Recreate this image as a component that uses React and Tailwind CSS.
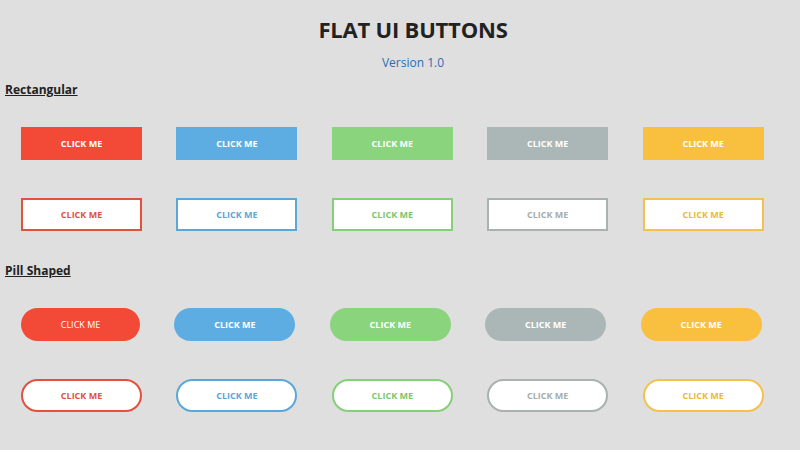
import React from "react";

const colors = [
  { name: "red", fill: "bg-[#f24a37]", border: "border-[#e2503e]", text: "text-[#e2503e]" },
  { name: "blue", fill: "bg-[#5dade2]", border: "border-[#5aa7d8]", text: "text-[#5aa7d8]" },
  { name: "green", fill: "bg-[#89d47c]", border: "border-[#86cf79]", text: "text-[#7cc66f]" },
  { name: "gray", fill: "bg-[#abb6b6]", border: "border-[#a9b1b1]", text: "text-[#a5aeae]" },
  { name: "yellow", fill: "bg-[#f8c03e]", border: "border-[#f4c24c]", text: "text-[#eab83f]" },
];

const Row = ({ children }) => (
  <div className="grid grid-cols-5 w-[777px] ml-[5px]">{children}</div>
);

const App = () => {
  return (
    <div
      className="w-[800px] h-[450px] bg-[#dfdfdf] text-[#222] overflow-hidden"
      style={{ fontFamily: '"Open Sans", "Noto Sans", sans-serif' }}
    >
      <h1 className="pt-[15px] text-center text-[22px] leading-[28px] font-bold tracking-[-0.2px] text-[#222] ml-[26px]">
        FLAT UI BUTTONS
      </h1>
      <p className="mt-[12px] text-center text-[12px] leading-[16px] text-[#2f6db0] ml-[26px]">
        Version 1.0
      </p>
      <h2 className="mt-[11px] ml-[5px] text-[12px] leading-[16px] font-bold underline">
        Rectangular
      </h2>

      <div className="mt-[29px]">
        <Row>
          {colors.map((c) => (
            <button
              key={c.name}
              className={`ml-4 w-[121px] h-[33px] ${c.fill} text-white text-[9px] font-bold`}
            >
              CLICK ME
            </button>
          ))}
        </Row>
      </div>
      <div className="mt-[38px]">
        <Row>
          {colors.map((c) => (
            <button
              key={c.name}
              className={`ml-4 w-[121px] h-[33px] bg-white border-2 ${c.border} ${c.text} text-[9px] font-bold`}
            >
              CLICK ME
            </button>
          ))}
        </Row>
      </div>

      <h2 className="mt-[32px] ml-[5px] text-[12px] leading-[16px] font-bold underline">
        Pill Shaped
      </h2>

      <div className="mt-[29px]">
        <Row>
          {colors.map((c, i) => (
            <button
              key={c.name}
              className={`h-[33px] rounded-full ${c.fill} text-white text-[9px] ${
                i === 0 ? "ml-4 w-[119px] font-normal" : "ml-[14px] w-[121px] font-bold"
              }`}
            >
              CLICK ME
            </button>
          ))}
        </Row>
      </div>
      <div className="mt-[38px]">
        <Row>
          {colors.map((c) => (
            <button
              key={c.name}
              className={`ml-4 w-[121px] h-[33px] rounded-full bg-white border-2 ${c.border} ${c.text} text-[9px] font-bold`}
            >
              CLICK ME
            </button>
          ))}
        </Row>
      </div>
    </div>
  );
};

export default App;
